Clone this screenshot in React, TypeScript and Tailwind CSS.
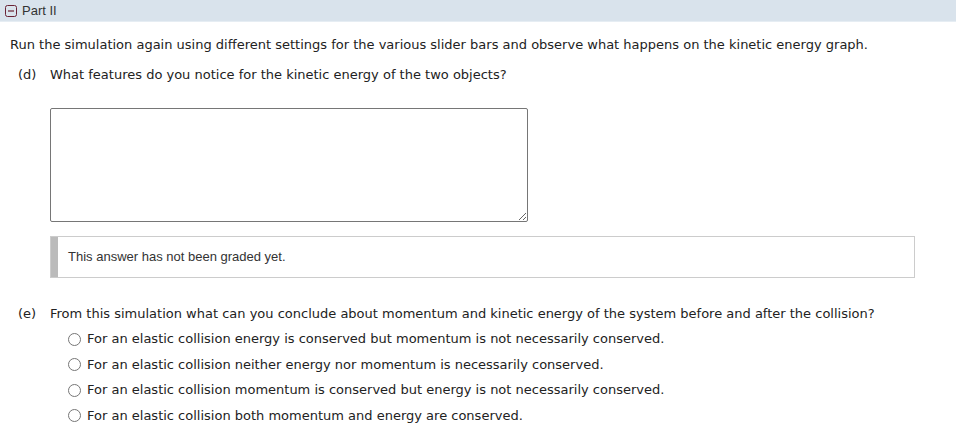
import React, { useState } from "react";

const OPTIONS = [
  "For an elastic collision energy is conserved but momentum is not necessarily conserved.",
  "For an elastic collision neither energy nor momentum is necessarily conserved.",
  "For an elastic collision momentum is conserved but energy is not necessarily conserved.",
  "For an elastic collision both momentum and energy are conserved.",
];

const verdana = { fontFamily: '"DejaVu Sans", Verdana, sans-serif' };
const arial = { fontFamily: '"Liberation Sans", Arial, sans-serif' };

const App = () => {
  const [answer, setAnswer] = useState("");
  const [choice, setChoice] = useState<number | null>(null);

  return (
    <div className="min-h-screen bg-white text-[#222]">
      {/* section header */}
      <div className="h-[22px] bg-[#d9e3ec] flex items-center pl-[5px] gap-[5px] border-b border-[#e6edf3]">
        <svg width="12" height="12" viewBox="0 0 12 12">
          <rect x="0.5" y="0.5" width="11" height="11" rx="2" fill="none" stroke="#6b2335" strokeWidth="1" />
          <line x1="3" y1="6" x2="9" y2="6" stroke="#6b2335" strokeWidth="1.2" />
        </svg>
        <span className="text-[13px] text-[#333]" style={arial}>
          Part II
        </span>
      </div>

      <div className="pl-[10px] pt-[15px] text-[13px]" style={verdana}>
        <p className="leading-[16px]">
          Run the simulation again using different settings for the various slider bars and observe what happens on the kinetic energy graph.
        </p>

        <div className="flex mt-[14px] leading-[16px]">
          <span className="w-[40px] pl-[8px]">(d)</span>
          <span>What features do you notice for the kinetic energy of the two objects?</span>
        </div>

        <div className="pl-[40px] mt-[25px]">
          <textarea
            value={answer}
            onChange={(e) => setAnswer(e.target.value)}
            className="block w-[478px] h-[114px] border border-[#767676] rounded-[2px] bg-white outline-none p-1"
          />

          <div className="mt-[14px] mr-[41px] h-[42px] flex border border-[#cccccc]">
            <div className="w-[7px] bg-[#bbbbbb]" />
            <div className="flex items-center pl-[10px] text-[13px] text-[#333]" style={arial}>
              This answer has not been graded yet.
            </div>
          </div>
        </div>

        <div className="flex mt-[28px] leading-[16px]">
          <span className="w-[40px] pl-[8px]">(e)</span>
          <span>
            From this simulation what can you conclude about momentum and kinetic energy of the system before and after the collision?
          </span>
        </div>

        <div className="pl-[58px] mt-[9px] flex flex-col gap-[9.5px]">
          {OPTIONS.map((opt, i) => (
            <label key={opt} className="flex items-center gap-[6px] leading-[16px] cursor-pointer">
              <input
                type="radio"
                name="part-e"
                checked={choice === i}
                onChange={() => setChoice(i)}
                className="m-0 w-[13px] h-[13px]"
              />
              <span>{opt}</span>
            </label>
          ))}
        </div>
      </div>
    </div>
  );
};

export default App;
